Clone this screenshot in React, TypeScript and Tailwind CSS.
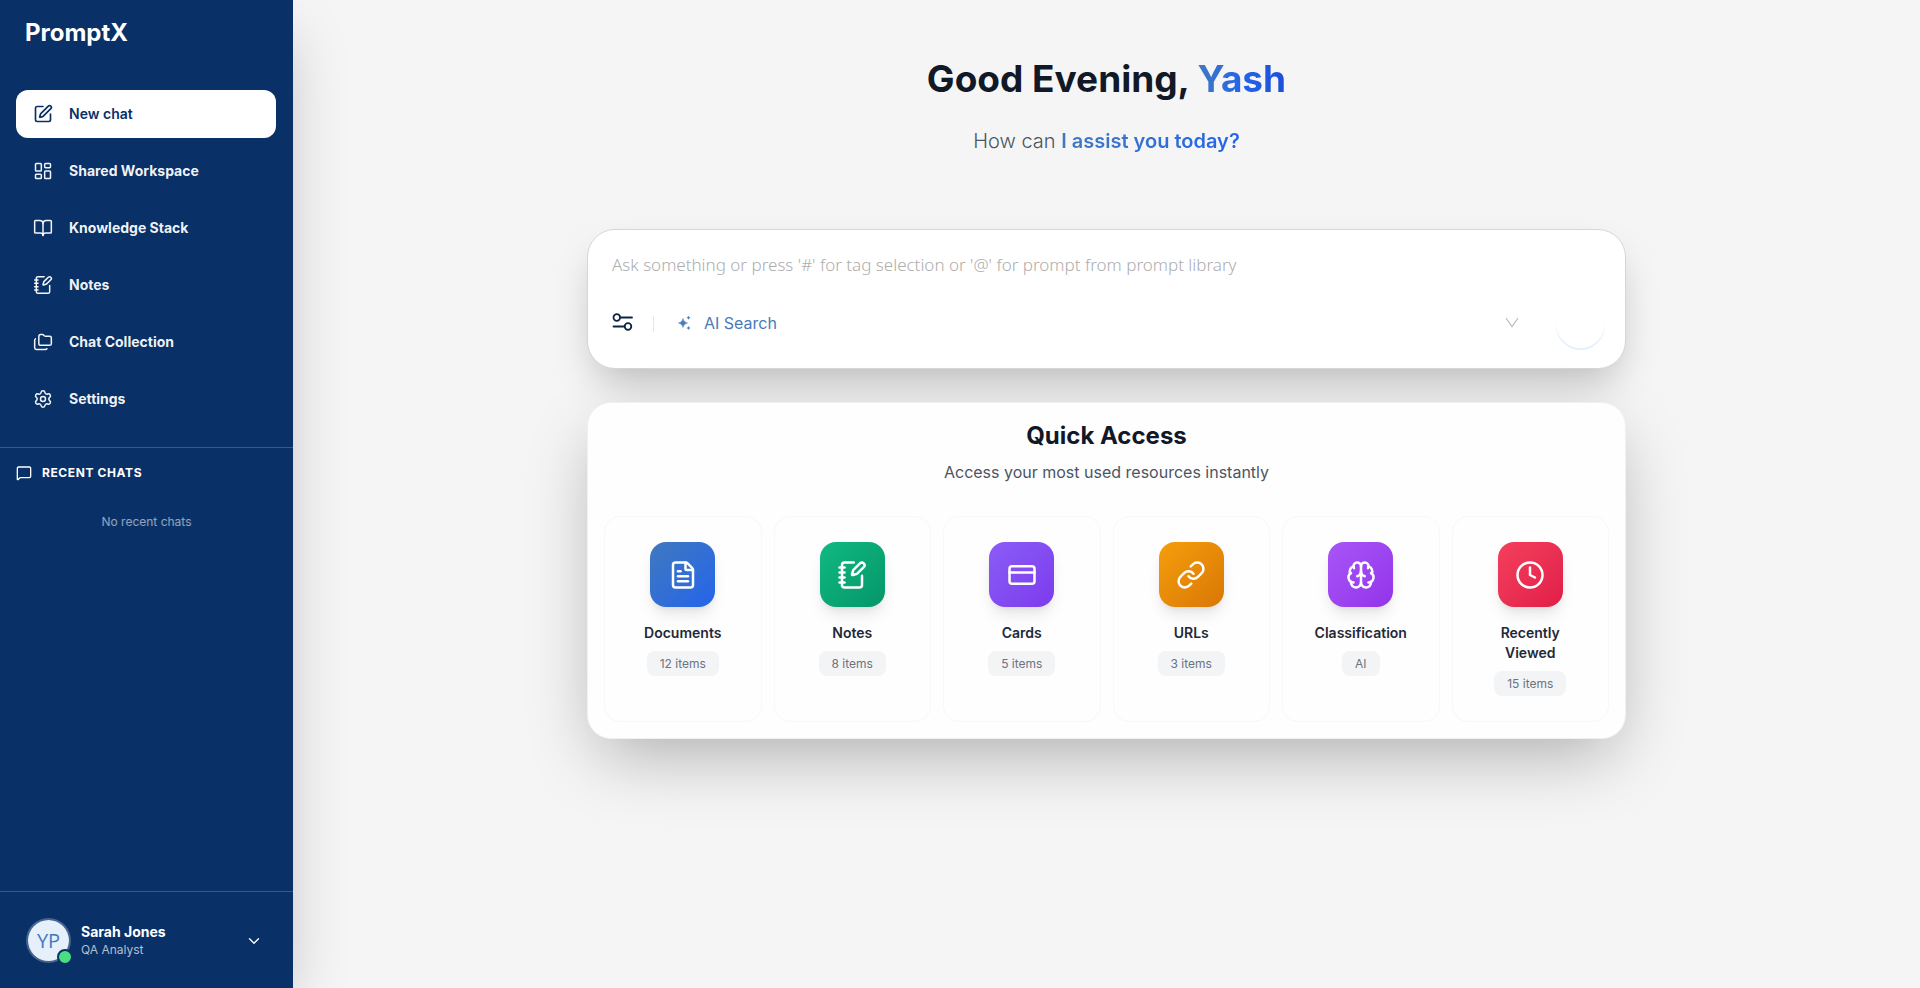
import type { LucideIcon } from 'lucide-react';
import {
  BookOpen,
  Brain,
  ChevronDown,
  Clock,
  CreditCard,
  FileText,
  Folders,
  LayoutDashboard,
  Link,
  MessageSquare,
  NotebookPen,
  Settings,
  SquarePen,
} from 'lucide-react';
import clsx from 'clsx';

interface NavItem {
  label: string;
  icon: LucideIcon;
  active?: boolean;
}

interface QuickItem {
  label: string;
  badge: string;
  icon: LucideIcon;
  gradient: string;
}

const NAV_ITEMS: NavItem[] = [
  { label: 'New chat', icon: SquarePen, active: true },
  { label: 'Shared Workspace', icon: LayoutDashboard },
  { label: 'Knowledge Stack', icon: BookOpen },
  { label: 'Notes', icon: NotebookPen },
  { label: 'Chat Collection', icon: Folders },
  { label: 'Settings', icon: Settings },
];

const QUICK_ITEMS: QuickItem[] = [
  { label: 'Documents', badge: '12 items', icon: FileText, gradient: 'from-[#4178be] to-[#2563eb]' },
  { label: 'Notes', badge: '8 items', icon: NotebookPen, gradient: 'from-[#10b981] to-[#059669]' },
  { label: 'Cards', badge: '5 items', icon: CreditCard, gradient: 'from-[#8b5cf6] to-[#7c3aed]' },
  { label: 'URLs', badge: '3 items', icon: Link, gradient: 'from-[#f59e0b] to-[#d97706]' },
  { label: 'Classification', badge: 'AI', icon: Brain, gradient: 'from-[#a855f7] to-[#9333ea]' },
  { label: 'Recently Viewed', badge: '15 items', icon: Clock, gradient: 'from-[#f43f5e] to-[#e11d48]' },
];

export default function App() {
  return (
    <div className="flex min-h-screen bg-[#f5f5f5] font-[Inter,sans-serif]">
      <Sidebar />
      <main className="flex min-w-0 flex-1 flex-col items-center px-6 pt-[59px] pb-10">
        <h1 className="text-[37px] leading-10 font-bold text-[#111827]">
          Good Evening,{' '}
          <span className="bg-linear-to-r from-[#4178be] via-[#2563eb] to-[#1d4ed8] bg-clip-text text-transparent">
            Yash
          </span>
        </h1>
        <p className="mt-7 text-xl font-light text-[#4b5563]">
          How can{' '}
          <span className="bg-linear-to-r from-[#4178be] to-[#2563eb] bg-clip-text font-semibold text-transparent">
            I assist you today?
          </span>
        </p>

        <div className="mt-[74px] w-full max-w-[1039px] space-y-[33px]">
          <PromptBox />
          <QuickAccess />
        </div>
      </main>
    </div>
  );
}

function Sidebar() {
  return (
    <aside className="sticky top-0 z-10 flex h-screen w-[293px] shrink-0 flex-col bg-[#093067] text-white shadow-[0_25px_60px_-12px_rgba(0,0,0,0.25)]">
      <div className="px-[25px] pt-[17px] pb-[41px] text-2xl font-bold">PromptX</div>

      <nav className="flex flex-col gap-[9px] border-b border-white/20 pr-[17px] pb-6 pl-4">
        {NAV_ITEMS.map(({ label, icon: Icon, active }) => (
          <a
            key={label}
            href="#"
            className={clsx(
              'flex h-12 items-center gap-4 rounded-xl px-[17px] text-sm',
              active ? 'bg-white font-semibold text-[#093067]' : 'font-bold text-white/95',
            )}
          >
            <Icon size={20} strokeWidth={active ? 2 : 1.8} />
            {label}
          </a>
        ))}
      </nav>

      {/* Recent chats */}
      <section className="flex-1 px-4 pt-4">
        <h2 className="flex items-center gap-2.5 text-xs leading-[18px] font-bold tracking-wider">
          <MessageSquare size={16} strokeWidth={2} />
          RECENT CHATS
        </h2>
        <p className="mt-8 text-center text-xs text-white/55">No recent chats</p>
      </section>

      {/* User */}
      <button
        type="button"
        className="flex items-center gap-2.5 border-t border-white/20 px-[26px] pt-[26px] pb-[25px] text-left"
      >
        <span className="relative flex size-[45px] shrink-0 items-center justify-center rounded-full border-2 border-white/25 bg-[#e6f0fa] bg-clip-padding font-['Open_Sans',sans-serif] text-xl font-medium text-[#4178be]">
          YP
          <span className="absolute -right-1 -bottom-1 size-4 rounded-full border-2 border-[#093067] bg-[#4ade80]" />
        </span>
        <span className="flex-1">
          <span className="block text-sm leading-[18px] font-bold">Sarah Jones</span>
          <span className="block text-xs leading-[18px] text-white/70">QA Analyst</span>
        </span>
        <ChevronDown size={18} strokeWidth={1.8} className="mr-1" />
      </button>
    </aside>
  );
}

function PromptBox() {
  return (
    <form className="rounded-[28px] border border-[#d6d6d6] bg-white py-5 pr-5 pl-6 shadow-[0_20px_40px_-10px_rgba(0,0,0,0.25)]">
      <textarea
        rows={1}
        aria-label="Prompt"
        placeholder="Ask something or press '#' for tag selection or '@' for prompt from prompt library"
        className="block h-[30px] w-full resize-none font-['Noto_Sans',sans-serif] text-[17px] leading-[30px] font-light outline-none placeholder:text-[#adadad]"
      />
      <div className="mt-[19px] flex items-center">
        <button type="button" aria-label="Filters" className="pb-1 text-[#0b2545]">
          <SlidersIcon />
        </button>
        <span className="mx-5 h-4 w-px bg-[#e8e8e8]" />
        <button type="button" className="ml-1 flex items-center gap-3 pb-0.5 text-base text-[#4a7ab8]">
          <SparklesIcon />
          AI Search
        </button>
        <button type="button" aria-label="Choose mode" className="ml-auto pb-0.5 text-[#bfbfbf]">
          <svg width="14" height="12" viewBox="0 0 14 12" fill="none" stroke="currentColor" strokeWidth="1.3">
            <path d="M1 1l6 8.5L13 1" />
          </svg>
        </button>
        <button
          type="submit"
          aria-label="Send"
          className="ml-[37px] size-[49px] rounded-full bg-white shadow-[0_2px_0_#e3f0fd]"
        />
      </div>
    </form>
  );
}

function QuickAccess() {
  return (
    <section className="rounded-3xl border border-[#f0f0f0] bg-[#fefefe] px-4 pt-[17px] pb-4 shadow-[0_25px_70px_-12px_rgba(0,0,0,0.3)]">
      <h2 className="text-center text-2xl font-bold text-[#111827]">Quick Access</h2>
      <p className="mt-2 text-center text-base text-[#4b5563]">Access your most used resources instantly</p>
      <div className="mt-8 grid grid-cols-6 gap-3">
        {QUICK_ITEMS.map(({ label, badge, icon: Icon, gradient }) => (
          <button
            key={label}
            type="button"
            className="flex flex-col items-center rounded-2xl border border-[#f8f8f9] bg-[#fefefe] px-6 py-[25px]"
          >
            <span
              className={clsx(
                'flex size-[65px] items-center justify-center rounded-2xl bg-linear-to-br text-white shadow-lg',
                gradient,
              )}
            >
              <Icon size={30} />
            </span>
            <span className="mt-4 text-sm font-semibold text-[#1f2937]">{label}</span>
            <span className="mt-2 rounded-lg bg-[#f3f4f6] px-[13px] py-1 text-xs leading-[17px] text-[#6b7280]">
              {badge}
            </span>
          </button>
        ))}
      </div>
    </section>
  );
}

function SlidersIcon() {
  return (
    <svg width="21" height="20" viewBox="0 0 21 20" fill="none" stroke="currentColor" strokeWidth="1.8">
      <circle cx="4.8" cy="5.5" r="3.3" />
      <path d="M8.200 5.500h11.800" strokeLinecap="round" />
      <circle cx="16" cy="14.500" r="3.300" />
      <path d="M12.500 14.500H1.500" strokeLinecap="round" />
    </svg>
  );
}

function SparklesIcon() {
  return (
    <svg width="14" height="16" viewBox="0 0 14 16" fill="currentColor">
      <path
        d="M5 3.5q.7 3.8 4.5 4.5Q5.7 8.7 5 12.5 4.3 8.7.5 8 4.3 7.3 5 3.5Z"
        stroke="currentColor"
        strokeWidth=".5"
      />
      <path d="M10.5.7q.3 1.7 2 2-1.7.3-2 2-.3-1.7-2-2 1.7-.3 2-2Z" />
      <path d="M10.5 11q.3 1.7 2 2-1.7.3-2 2-.3-1.7-2-2 1.7-.3 2-2Z" />
    </svg>
  );
}
